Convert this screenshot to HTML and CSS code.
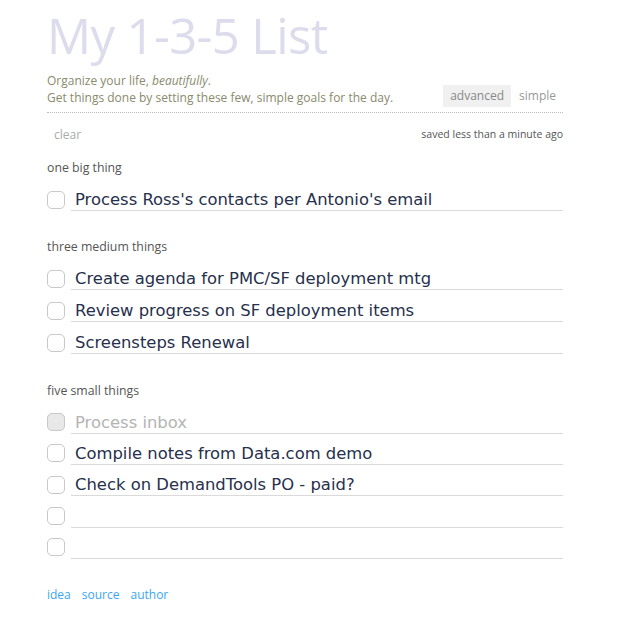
FILE: index.html
```html
<!DOCTYPE html>
<html>
<head>
<meta charset="utf-8">
<title>My 1-3-5 List</title>
<link rel="stylesheet" href="styles.css">
</head>
<body>
<div class="page">
  <h1 class="title">My 1-3-5 List</h1>
  <div class="header-row">
    <div class="tagline">
      <div>Organize your life, <em>beautifully</em>.</div>
      <div>Get things done by setting these few, simple goals for the day.</div>
    </div>
    <div class="modes">
      <span class="mode active">advanced</span>
      <span class="mode">simple</span>
    </div>
  </div>
  <div class="toolbar">
    <span class="clear">clear</span>
    <span class="saved">saved less than a minute ago</span>
  </div>

  <div class="section">
    <div class="section-title">one big thing</div>
    <div class="item"><span class="box"></span><span class="text">Process Ross's contacts per Antonio's email</span></div>
  </div>

  <div class="section">
    <div class="section-title">three medium things</div>
    <div class="item"><span class="box"></span><span class="text">Create agenda for PMC/SF deployment mtg</span></div>
    <div class="item"><span class="box"></span><span class="text">Review progress on SF deployment items</span></div>
    <div class="item"><span class="box"></span><span class="text">Screensteps Renewal</span></div>
  </div>

  <div class="section small">
    <div class="section-title">five small things</div>
    <div class="item done"><span class="box"></span><span class="text">Process inbox</span></div>
    <div class="item"><span class="box"></span><span class="text">Compile notes from Data.com demo</span></div>
    <div class="item"><span class="box"></span><span class="text">Check on DemandTools PO - paid?</span></div>
    <div class="item"><span class="box"></span><span class="text"></span></div>
    <div class="item"><span class="box"></span><span class="text"></span></div>
  </div>

  <div class="footer">
    <a href="#">idea</a>
    <a href="#">source</a>
    <a href="#">author</a>
  </div>
</div>
</body>
</html>
```
FILE: styles.css
```css
html, body {
  margin: 0;
  padding: 0;
  background: #fff;
}
body {
  font-family: "Open Sans", "Noto Sans", sans-serif;
}
.page {
  width: 516px;
  margin-left: 47px;
}
.title {
  margin: 0;
  font-family: "Open Sans", sans-serif;
  font-weight: 400;
  font-size: 49px;
  line-height: 71.5px;
  color: #dcdcec;
  letter-spacing: -0.6px;
}
.header-row {
  display: flex;
  justify-content: space-between;
  align-items: flex-end;
  padding-bottom: 5px;
  border-bottom: 1px dotted #bbb;
}
.tagline {
  font-size: 12px;
  line-height: 17px;
  color: #8a8a6c;
  padding-bottom: 1.5px;
}
.tagline em {
  font-style: italic;
}
.modes {
  display: flex;
  gap: 1px;
}
.mode {
  font-size: 12px;
  line-height: 22px;
  padding: 0 7px;
  color: #999;
}
.mode.active {
  background: #f0f0f0;
  color: #888;
}
.toolbar {
  display: flex;
  justify-content: space-between;
  align-items: center;
  height: 42px;
  font-size: 12px;
}
.clear {
  color: #aaa;
  margin-left: 7px;
}
.saved {
  color: #555;
  font-size: 10.5px;
}
.section {
  margin-top: 4px;
  margin-bottom: 22px;
}
.section + .section {
  margin-top: 0;
}
.section.small {
  padding-top: 1px;
}
.section-title {
  font-size: 12.3px;
  color: #555;
  line-height: 17px;
  margin-bottom: 8px;
}
.item {
  display: flex;
  align-items: center;
  height: 32px;
}
.section.small .item {
  height: 31.3px;
}
.box {
  flex: none;
  width: 16px;
  height: 16px;
  border: 1px solid #c8c8c8;
  border-radius: 5px;
  background: #fff;
  margin-right: 6px;
  margin-top: -1px;
}
.item.done .box {
  background: #e8e8e8;
}
.text {
  flex: 1;
  height: 21px;
  margin-top: 1px;
  box-sizing: border-box;
  border-bottom: 1px solid #dadada;
  padding-left: 4px;
  font-family: "DejaVu Sans", sans-serif;
  font-size: 16.4px;
  line-height: 20px;
  color: #27304c;
  white-space: nowrap;
}
.item.done .text {
  color: #b4b4b4;
}
.footer {
  margin-top: 23px;
  display: flex;
  gap: 11px;
  font-size: 12px;
}
.footer a {
  color: #3aa6f5;
  text-decoration: none;
}
```
